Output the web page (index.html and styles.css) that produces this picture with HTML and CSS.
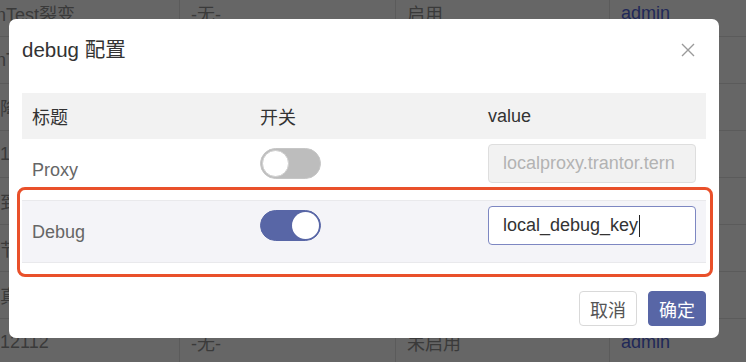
FILE: index.html
```html
<!DOCTYPE html>
<html lang="zh">
<head>
<meta charset="utf-8">
<link rel="stylesheet" href="styles.css">
</head>
<body>
<div class="bg-table">
  <div class="bg-row"><div class="bg-cell c1 shift">nTest裂变</div><div class="bg-cell">-无-</div><div class="bg-cell">启用</div><div class="bg-cell link">admin</div></div>
  <div class="bg-row"><div class="bg-cell c1 shift">nT</div><div class="bg-cell">-无-</div><div class="bg-cell">启用</div><div class="bg-cell link">admin</div></div>
  <div class="bg-row"><div class="bg-cell c1">降</div><div class="bg-cell">-无-</div><div class="bg-cell">启用</div><div class="bg-cell link">admin</div></div>
  <div class="bg-row"><div class="bg-cell c1">1</div><div class="bg-cell">-无-</div><div class="bg-cell">启用</div><div class="bg-cell link">admin</div></div>
  <div class="bg-row"><div class="bg-cell c1">到</div><div class="bg-cell">-无-</div><div class="bg-cell">启用</div><div class="bg-cell link">admin</div></div>
  <div class="bg-row"><div class="bg-cell c1">节</div><div class="bg-cell">-无-</div><div class="bg-cell">启用</div><div class="bg-cell link">admin</div></div>
  <div class="bg-row"><div class="bg-cell c1">真</div><div class="bg-cell">-无-</div><div class="bg-cell">启用</div><div class="bg-cell link">admin</div></div>
  <div class="bg-row"><div class="bg-cell c1">12112</div><div class="bg-cell">-无-</div><div class="bg-cell">未启用</div><div class="bg-cell link">admin</div></div>
</div>

<div class="modal">
  <div class="modal-header">
    <div class="modal-title">debug 配置</div>
    <svg class="close" width="14" height="14" viewBox="0 0 14 14"><path d="M1 1 L13 13 M13 1 L1 13" stroke="#9a9a9a" stroke-width="1.4" fill="none"/></svg>
  </div>
  <div class="table">
    <div class="row head">
      <div class="cell">标题</div>
      <div class="cell">开关</div>
      <div class="cell">value</div>
    </div>
    <div class="row body-row">
      <div class="cell label">Proxy</div>
      <div class="cell"><div class="ctrl"><span class="switch off"><span class="knob"></span></span></div></div>
      <div class="cell"><div class="ctrl"><div class="field disabled"><span class="clip">localproxy.trantor.tern</span></div></div></div>
    </div>
    <div class="row body-row active">
      <div class="cell label">Debug</div>
      <div class="cell"><div class="ctrl"><span class="switch on"><span class="knob"></span></span></div></div>
      <div class="cell"><div class="ctrl"><div class="field focus">local_debug_key<span class="caret"></span></div></div></div>
    </div>
  </div>
  <div class="modal-footer">
    <button class="btn">取消</button>
    <button class="btn primary">确定</button>
  </div>
</div>

<div class="highlight"></div>
</body>
</html>
```

FILE: styles.css
```css
html, body {
  margin: 0;
  padding: 0;
}
body {
  position: relative;
  width: 746px;
  height: 362px;
  overflow: hidden;
  background: #666666;
  font-family: "Liberation Sans", "Noto Sans CJK SC", sans-serif;
  color: #333;
}

/* background (dimmed) table */
.bg-table {
  margin-top: -10px;
}
.bg-row {
  display: grid;
  grid-template-columns: 179px 216px 214px 137px;
  height: 47px;
  box-sizing: border-box;
  border-bottom: 1px solid #5b5b5b;
}
.bg-cell {
  display: flex;
  align-items: center;
  padding-left: 11px;
  font-size: 18px;
  color: #3a3a3a;
  border-left: 1px solid #5b5b5b;
  white-space: nowrap;
  overflow: hidden;
}
.bg-cell.c1 {
  padding-left: 0;
  border-left: none;
}
.bg-cell.shift {
  text-indent: -4px;
}
.bg-cell.link {
  color: #1f2858;
}

/* modal */
.modal {
  position: absolute;
  left: 9px;
  top: 19px;
  width: 710px;
  height: 319px;
  box-sizing: border-box;
  background: #fff;
  border-radius: 7px;
  padding: 0 13px 12px 13px;
  display: flex;
  flex-direction: column;
}
.modal-header {
  height: 74px;
  box-sizing: border-box;
  padding-top: 19px;
  display: flex;
  justify-content: space-between;
  align-items: flex-start;
}
.modal-title {
  font-size: 20.5px;
  line-height: 24px;
  color: #333;
}
.close {
  margin-top: 5px;
  margin-right: 11px;
}

.table {
  display: flex;
  flex-direction: column;
}
.row {
  display: grid;
  grid-template-columns: 228px 228px 228px;
  box-sizing: border-box;
}
.row.head {
  height: 46px;
  background: #f2f2f2;
}
.row.body-row {
  height: 62px;
  border-bottom: 1px solid #e9e9ec;
}
.row.active {
  background: #f4f4f8;
}
.cell {
  display: flex;
  align-items: center;
  padding: 0 10px;
  font-size: 18px;
  color: #333;
  min-width: 0;
}
.cell.label {
  color: #666;
  padding-top: 2px;
}
.ctrl {
  margin-bottom: 12px;
  width: 100%;
  display: flex;
}

.switch {
  position: relative;
  display: inline-block;
  width: 61px;
  height: 31px;
  box-sizing: border-box;
  border-radius: 16px;
}
.switch.off {
  background: #bdbdbd;
  border: 1px solid #c6c6c6;
}
.switch.on {
  background: #5866a6;
  border: 1px solid #5866a6;
}
.knob {
  position: absolute;
  top: 1px;
  width: 27px;
  height: 27px;
  border-radius: 50%;
  background: #fff;
  box-sizing: border-box;
}
.switch.off .knob {
  left: 1px;
  border: 1px solid #cfcfcf;
}
.switch.on .knob {
  right: 1px;
}

.field {
  width: 100%;
  height: 39px;
  box-sizing: border-box;
  border-radius: 4px;
  padding: 0 14px;
  display: flex;
  align-items: center;
  font-size: 18px;
  white-space: nowrap;
}
.clip {
  display: block;
  overflow: hidden;
  width: 100%;
}
.field.disabled {
  background: #f2f2f2;
  border: 1px solid #dedede;
  color: #b3b3b3;
}
.field.focus {
  background: #fff;
  border: 1px solid #7d87c2;
  color: #333;
}
.caret {
  display: inline-block;
  width: 1px;
  height: 22px;
  background: #222;
  margin-left: 1px;
}

.modal-footer {
  margin-top: auto;
  display: flex;
  justify-content: flex-end;
  gap: 11px;
}
.btn {
  height: 35px;
  box-sizing: border-box;
  padding: 0 10px;
  font-family: "Liberation Sans", "Noto Sans CJK SC", sans-serif;
  font-size: 18px;
  border-radius: 4px;
  border: 1px solid #d9d9d9;
  background: #fff;
  color: #555;
}
.btn.primary {
  background: #5866a6;
  border-color: #5866a6;
  color: #fff;
}

.highlight {
  position: absolute;
  left: 17px;
  top: 187px;
  width: 696px;
  height: 90px;
  box-sizing: border-box;
  border: 3px solid #e9502a;
  border-radius: 8px;
}
```
